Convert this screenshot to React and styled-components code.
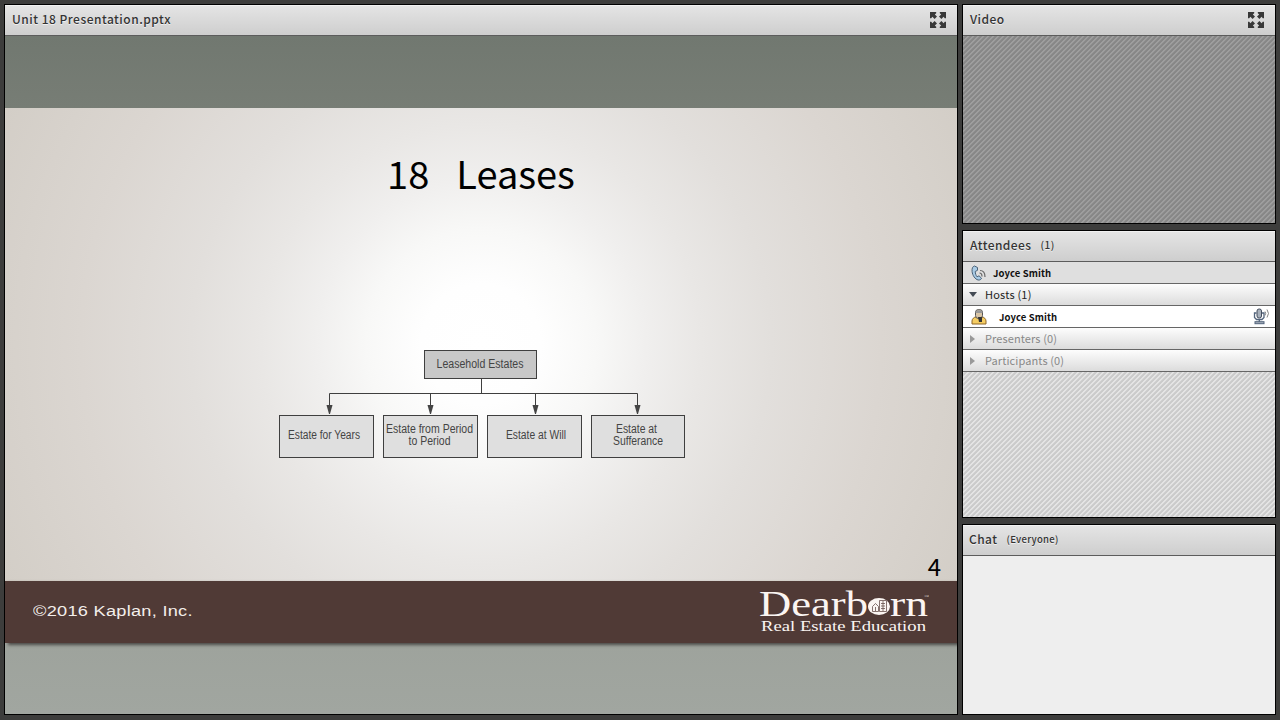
import React from "react";
import styled, { createGlobalStyle } from "styled-components";

const GlobalStyle = createGlobalStyle`
  * {
    box-sizing: border-box;
  }
  body {
    margin: 0;
    background: #3d3d3c;
  }
`;

const Room = styled.div`
  display: flex;
  gap: 4px;
  width: 1280px;
  height: 720px;
  padding: 4px 4px 5px;
  overflow: hidden;
  background: #3d3d3c;
  color: #333;
  font-family: "Noto Sans CJK SC", "Noto Sans", sans-serif;
`;

const Sidebar = styled.div`
  display: flex;
  flex-direction: column;
  gap: 6px;
  width: 314px;
`;

const Pod = styled.section`
  display: flex;
  flex-direction: column;
  width: ${(props) => props.$width || "100%"};
  height: ${(props) => props.$height};
  flex-shrink: 0;
  border: 1px solid #000;
  overflow: hidden;
`;

const PodHeader = styled.header`
  display: flex;
  align-items: center;
  height: 31px;
  flex-shrink: 0;
  padding: 0 10px 1px ${(props) => props.$left || 7}px;
  background: linear-gradient(#e4e4e4, #cecece);
  border-top: 1px solid #f1f1f1;
  border-bottom: 1px solid #5c5c5c;
  svg {
    margin-left: auto;
  }
`;

const PodTitle = styled.span`
  padding-bottom: 2px;
  font-size: ${(props) => props.$size || 12}px;
  font-weight: 500;
  line-height: 20px;
  letter-spacing: ${(props) => props.$spacing || 0.45}px;
  white-space: nowrap;
  text-shadow: 0 1px 0 #f0f0f0;
`;

const PodCount = styled(PodTitle)`
  margin-left: 9px;
`;

const Hatch = styled.div`
  flex: 1;
  background: repeating-linear-gradient(
    135deg,
    ${(props) => props.$line} 0 0.7px,
    ${(props) => props.$base} 1.6px 2.8px,
    ${(props) => props.$line} 3.536px
  );
`;

const ChatLog = styled.div`
  flex: 1;
  background: #eee;
`;

const Row = styled.div`
  display: flex;
  align-items: center;
  height: 22px;
  flex-shrink: 0;
  padding: 0 5px 0 8px;
  border-bottom: 1px solid #666;
  background: ${(props) => props.$background || "#fff"};
`;

const GroupRow = styled(Row)`
  padding-bottom: 2px;
  background: linear-gradient(#fdfdfd, #dcdcdc);
  color: ${(props) => (props.$empty ? "#888" : "#222")};
  font-size: 11px;
  letter-spacing: ${(props) => (props.$empty ? 0.1 : 0.2)}px;
  line-height: 20px;
`;

const Arrow = styled.span`
  width: 14px;
  height: 8px;
  flex-shrink: 0;
  display: flex;
  align-items: center;
  margin-top: 2px;
  &::before {
    content: "";
    border: 4px solid transparent;
    ${(props) =>
      props.$open
        ? "border-top: 5px solid #444b55; border-bottom: 0; margin-left: -2px;"
        : "border-left: 5px solid #999; border-right: 0; margin-left: -1px;"}
  }
`;

const Person = styled.span`
  flex: 1;
  margin-left: ${(props) => props.$indent}px;
  color: #111;
  font-size: 9.5px;
  font-weight: 700;
  line-height: 20px;
  letter-spacing: 0.1px;
`;

const Stage = styled.div`
  display: flex;
  flex-direction: column;
  flex: 1;
  background: linear-gradient(#717870 0, #777d75 72px, #9ba099 540px, #a1a6a0);
  padding-top: 72px;
`;

const Slide = styled.div`
  display: flex;
  flex-direction: column;
  height: 473px;
  padding-top: 37px;
  align-items: center;
  background: radial-gradient(
    circle at 476px 236px,
    #fff 0,
    #fefefe 60px,
    #f8f8f7 115px,
    #f0efee 165px,
    #e9e7e5 220px,
    #e2dfdc 290px,
    #dbd6d1 400px,
    #d3cec7 530px
  );
`;

const SlideTitle = styled.h1`
  margin: 0;
  height: 56px;
  color: #000;
  font-family: "Noto Sans CJK SC", sans-serif;
  font-size: 38px;
  font-weight: 400;
  line-height: 56px;
  word-spacing: 0.5px;
  white-space: pre;
`;

const Chart = styled.svg`
  display: block;
  margin: 148px 0 0 4px;
`;

const SlideNumber = styled.span`
  align-self: flex-end;
  margin: 93px 16px 0 0;
  color: #000;
  font-family: "Noto Sans CJK SC", sans-serif;
  font-size: 24px;
  line-height: 28px;
`;

const SlideFooter = styled.footer`
  display: flex;
  align-items: center;
  justify-content: space-between;
  height: 62px;
  padding: 0 26px 0 28px;
  background: #503a36;
  box-shadow: 3px 2px 3px #4b4a47;
`;

const Copyright = styled.span`
  color: #f3eeeb;
  font-family: "Liberation Sans", sans-serif;
  font-size: 14px;
  line-height: 20px;
  padding-bottom: 3px;
  letter-spacing: 0.2px;
  transform: scaleX(1.3);
  transform-origin: left;
`;

const boxes = [
  { x: 0.5, arrow: 50.5, lines: [["Estate for Years", 45, 90, 72]] },
  {
    x: 104.5,
    arrow: 151.5,
    lines: [
      ["Estate from Period", 150.5, 84, 87],
      ["to Period", 150.5, 96, 42],
    ],
  },
  { x: 208.5, arrow: 256.5, lines: [["Estate at Will", 257, 90, 60]] },
  {
    x: 312.5,
    width: 93,
    arrow: 358.5,
    lines: [
      ["Estate at", 357.5, 84, 41],
      ["Sufferance", 359, 96, 50],
    ],
  },
];

function ChartLabel({ text, x, y, width }) {
  return (
    <text x={x} y={y} textAnchor="middle" textLength={width} lengthAdjust="spacingAndGlyphs">
      {text}
    </text>
  );
}

function EstateChart() {
  return (
    <Chart width="408" height="110" fontFamily="Liberation Sans, sans-serif" fontSize="12" fill="#444">
      <g stroke="#3f3f3f" fill="none">
        <rect x="145.5" y="1.5" width="112" height="28" fill="#c8c8c8" />
        <path d="M202.5 30V44.5M50.5 60V44.5H358.5V60M151.5 44.5V60M256.5 44.5V60" />
        {boxes.map((box) => (
          <rect key={box.x} x={box.x} y="66.5" width={box.width || 94} height="42" fill="#dfdfdf" />
        ))}
      </g>
      <ChartLabel text="Leasehold Estates" x={201} y={19} width={87} />
      {boxes.map((box) => (
        <g key={box.x}>
          <path d={`M${box.arrow - 3} 56h6l-2.500 9h-1z`} />
          {box.lines.map(([text, x, y, width]) => (
            <ChartLabel key={text} text={text} x={x} y={y} width={width} />
          ))}
        </g>
      ))}
    </Chart>
  );
}

function DearbornLogo() {
  return (
    <svg width="172" height="62" fill="#fbf5f2" fontFamily="Liberation Serif, serif">
      <text x="0" y="35" fontSize="36" textLength="109" lengthAdjust="spacingAndGlyphs">
        Dearb
      </text>
      <text x="131" y="35" fontSize="36" textLength="38" lengthAdjust="spacingAndGlyphs">
        rn
      </text>
      <ellipse cx="120" cy="25.500" rx="11" ry="8.500" />
      <path
        d="M113.500 30.500v-5l3-3 3 3v5zM120.500 30.500v-11h7v11zM122 22.500h4M122 25h4M122 27.500h4M124 20v10M116.500 26v4"
        fill="none"
        stroke="#68514c"
        strokeWidth=".8"
      />
      <text x="165" y="17" fontSize="5" opacity=".7">
        ™
      </text>
      <text x="2" y="50" fontSize="14" textLength="165" lengthAdjust="spacingAndGlyphs">
        Real Estate Education
      </text>
    </svg>
  );
}

function FullScreenIcon() {
  return (
    <svg width="18" height="18" viewBox="0 0 18 18" fill="#383838">
      {[0, 90, 180, 270].map((angle) => (
        <path key={angle} transform={`rotate(${angle} 9 9)`} d="M1 1h6.200v1.200L5.800 3.400 8 5.600 5.600 8 3.400 5.800 2.200 7.200H1z" />
      ))}
    </svg>
  );
}

function PhoneIcon() {
  return (
    <svg width="16" height="16" viewBox="0 0 16 16" fill="none">
      <path
        d="M3.500 1C1.500 1.500.8 3.500 1.100 6.500c.4 4 3 7.700 6 8.500 1.500.3 3.200-.5 3.400-1.800L8 10.800l-2 1C5 10.500 4.300 8.500 4.200 6.500l2.300-1.200V2.500z"
        fill="#a9cbe5"
        stroke="#4a6279"
      />
      <path d="M8.500 8c1.700 0 2.500 1.300 2.500 3.500M9 5.500c3 0 5 2.500 5 6.500" stroke="#666" strokeWidth="1.200" />
    </svg>
  );
}

function HostIcon() {
  return (
    <svg width="16" height="16" viewBox="0 0 16 16">
      <path d="M1 15v-3c0-2 2-4 4-4h6c2 0 4 2 4 4v3z" fill="#f5cd62" stroke="#8d6527" />
      <rect x="4.500" y=".5" width="7" height="9" rx="3" fill="#d9c5a5" stroke="#555" />
      <path d="M5 4V2l3-1 3 1v2z" fill="#999" />
      <path d="M7 8h4v5H8z" fill="#333" />
    </svg>
  );
}

function MicIcon() {
  return (
    <svg width="17" height="17" viewBox="0 0 17 17" fill="none" stroke="#53647c">
      <rect x="4" y="1" width="4.500" height="9" rx="2" fill="#a8b0bb" stroke="#444e5e" />
      <path d="M3.500 5h-2v4.500l2 2h5.500l2-2V5H9M6.300 11.500v4" strokeWidth="1.300" />
      <rect x="2" y="13.700" width="9" height="2" fill="#a8b0bb" />
      <path d="M12 3.500q1.500 1.500 0 4M14 1.500q3 4 0 8" stroke="#888" />
    </svg>
  );
}

function App() {
  return (
    <Room>
      <GlobalStyle />
      <Pod $width="954px" $height="711px">
        <PodHeader>
          <PodTitle $spacing={0.5}>Unit 18 Presentation.pptx</PodTitle>
          <FullScreenIcon />
        </PodHeader>
        <Stage>
          <Slide>
            <SlideTitle>18   Leases</SlideTitle>
            <EstateChart />
            <SlideNumber>4</SlideNumber>
          </Slide>
          <SlideFooter>
            <Copyright>©2016 Kaplan, Inc.</Copyright>
            <DearbornLogo />
          </SlideFooter>
        </Stage>
      </Pod>
      <Sidebar>
        <Pod $height="220px">
          <PodHeader>
            <PodTitle>Video</PodTitle>
            <FullScreenIcon />
          </PodHeader>
          <Hatch $line="#9e9e9e" $base="#878787" />
        </Pod>
        <Pod $height="288px">
          <PodHeader>
            <PodTitle>Attendees</PodTitle>
            <PodCount $size={10}>(1)</PodCount>
          </PodHeader>
          <Row $background="#dfdfdf">
            <PhoneIcon />
            <Person $indent={6}>Joyce Smith</Person>
          </Row>
          <GroupRow>
            <Arrow $open />
            Hosts (1)
          </GroupRow>
          <Row>
            <HostIcon />
            <Person $indent={12}>Joyce Smith</Person>
            <MicIcon />
          </Row>
          <GroupRow $empty>
            <Arrow />
            Presenters (0)
          </GroupRow>
          <GroupRow $empty>
            <Arrow />
            Participants (0)
          </GroupRow>
          <Hatch $line="#e4e4e4" $base="#cbcbcb" />
        </Pod>
        <Pod $height="191px">
          <PodHeader $left={6}>
            <PodTitle>Chat</PodTitle>
            <PodCount $size={9.5} $spacing={0.3}>(Everyone)</PodCount>
          </PodHeader>
          <ChatLog />
        </Pod>
      </Sidebar>
    </Room>
  );
}

export default App;
